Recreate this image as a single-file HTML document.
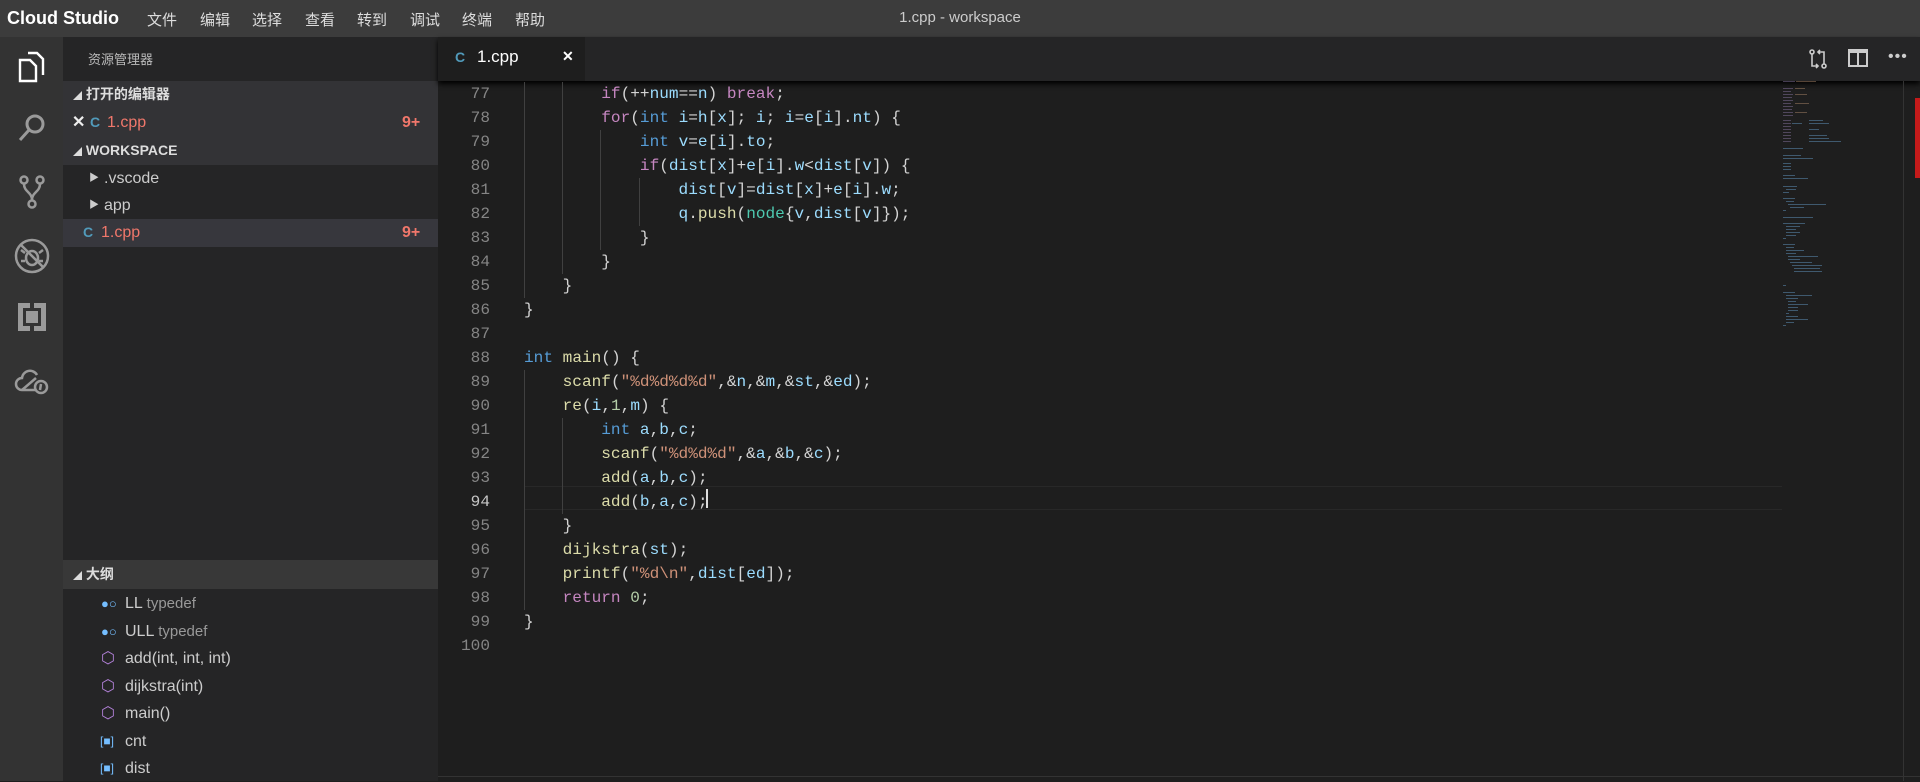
<!DOCTYPE html>
<html><head><meta charset="utf-8">
<style>
*{margin:0;padding:0;box-sizing:border-box}
body{width:1920px;height:781px;background:#1e1e1e;overflow:hidden;position:relative;font-family:"Liberation Sans","Noto Sans CJK SC",sans-serif;color:#ccc}
.abs{position:absolute}
#title{left:0;top:0;width:1920px;height:37px;background:#3c3c3c}
#title .brand{left:7px;top:8px;font-weight:bold;font-size:18px;color:#fff}
#title .m{top:9px;font-size:15px;color:#ddd}
#act{left:0;top:37px;width:63px;height:744px;background:#333}
#side{left:63px;top:37px;width:375px;height:744px;background:#252526}
.row{position:absolute;left:0;width:375px;height:27px;font-size:16px;line-height:27px;white-space:nowrap}
.hdr{font-weight:bold;font-size:14px;color:#ddd}
.red{color:#f0776b}
.code{font-family:"Liberation Mono",monospace;font-size:16.1px;white-space:pre}
.ln{position:absolute;left:440px;width:50px;text-align:right;color:#858585;height:24px;line-height:24px}
.cl{position:absolute;left:524px;height:24px;line-height:24px;color:#d4d4d4}
.k{color:#c586c0}.t{color:#569cd6}.v{color:#9cdcfe}.f{color:#dcdcaa}.s{color:#ce9178}.n{color:#b5cea8}.c{color:#4ec9b0}
.g{position:absolute;width:1px;background:#404040}
</style></head><body>
<div id="title" class="abs">
<div class="abs brand">Cloud Studio</div>
<div class="abs m" style="left:147px">文件</div>
<div class="abs m" style="left:200px">编辑</div>
<div class="abs m" style="left:252px">选择</div>
<div class="abs m" style="left:305px">查看</div>
<div class="abs m" style="left:357px">转到</div>
<div class="abs m" style="left:410px">调试</div>
<div class="abs m" style="left:462px">终端</div>
<div class="abs m" style="left:515px">帮助</div>
<div class="abs" style="left:0;width:1920px;text-align:center;top:9px;font-size:15px;color:#ccc">1.cpp - workspace</div>
</div>
<div id="act" class="abs">
<svg class="abs" style="left:14px;top:12px" width="36" height="36" viewBox="0 0 36 36" fill="none" stroke="#fff" stroke-width="2.4"><path d="M14 4h9l6 6v16"/><path d="M6 11h10l6 6v15H6z"/></svg>
<svg class="abs" style="left:14px;top:73px" width="36" height="36" viewBox="0 0 36 36" fill="none" stroke="#9a9a9a" stroke-width="3"><circle cx="21" cy="14" r="8"/><path d="M15 20L6 30"/></svg>
<svg class="abs" style="left:14px;top:135px" width="36" height="38" viewBox="0 0 36 38" fill="none" stroke="#9a9a9a" stroke-width="2.5"><circle cx="10" cy="8" r="3.5"/><circle cx="26" cy="8" r="3.5"/><circle cx="18" cy="32" r="3.5"/><path d="M10 12c0 8 8 8 8 16M26 12c0 8-8 8-8 16"/></svg>
<svg class="abs" style="left:13px;top:200px" width="38" height="38" viewBox="0 0 38 38" fill="none" stroke="#9a9a9a" stroke-width="2.5"><circle cx="19" cy="19" r="16"/><path d="M8 8l22 22"/><ellipse cx="19" cy="21" rx="6" ry="7"/><path d="M12 16l-4-3M26 16l4-3M12 24h-4M26 24h4"/></svg>
<svg class="abs" style="left:16px;top:264px" width="32" height="32" viewBox="0 0 32 32"><path d="M2 2h12v5H7v18h7v5H2zM18 2h12v28H18v-5h7V7h-7z" fill="#9a9a9a"/><rect x="10" y="10" width="12" height="12" fill="#9a9a9a"/></svg>
<svg class="abs" style="left:14px;top:329px" width="36" height="30" viewBox="0 0 36 30" fill="none" stroke="#9a9a9a" stroke-width="2.5"><path d="M22 24H8a6 6 0 0 1 0-12 8 8 0 0 1 15-3"/><path d="M8 24l14-12"/><circle cx="27" cy="21" r="6"/><path d="M27 18l-1 6"/></svg>
</div>
<div id="side" class="abs">
<div class="abs" style="left:25px;top:12px;font-size:13px;color:#bbb">资源管理器</div>
<div class="abs" style="left:0;top:44px;width:375px;height:84px;background:#333336"></div>
<div class="row hdr" style="top:44px"><span style="margin-left:10px;font-size:9px">◢</span> <span>打开的编辑器</span></div>
<div class="row" style="top:72px"><span style="position:absolute;left:9px;color:#eee;font-weight:bold">✕</span><span style="position:absolute;left:27px;color:#519aba;font-weight:bold;font-size:14px">C</span><span class="red" style="position:absolute;left:44px">1.cpp</span><span class="red" style="position:absolute;left:339px;font-weight:bold">9+</span></div>
<div class="row hdr" style="top:100px"><span style="margin-left:10px;font-size:9px">◢</span> <span>WORKSPACE</span></div>
<div class="row" style="top:128px"><span style="position:absolute;left:26px;font-size:10px">▶</span><span style="position:absolute;left:41px">.vscode</span></div>
<div class="row" style="top:155px"><span style="position:absolute;left:26px;font-size:10px">▶</span><span style="position:absolute;left:41px">app</span></div>
<div class="row" style="top:182px;background:#37373d;height:28px"><span style="position:absolute;left:20px;color:#519aba;font-weight:bold;font-size:14px">C</span><span class="red" style="position:absolute;left:38px">1.cpp</span><span class="red" style="position:absolute;left:339px;font-weight:bold">9+</span></div>
<div class="abs" style="left:0;top:523px;width:375px;height:29px;background:#383838"></div>
<div class="row hdr" style="top:524px"><span style="margin-left:10px;font-size:9px">◢</span> <span>大纲</span></div>
<div class="row" style="top:553px"><span style="position:absolute;left:38px;color:#75beff;font-size:13px">●○</span><span style="position:absolute;left:62px">LL <span style="color:#999;font-size:15px">typedef</span></span></div>
<div class="row" style="top:581px"><span style="position:absolute;left:38px;color:#75beff;font-size:13px">●○</span><span style="position:absolute;left:62px">ULL <span style="color:#999;font-size:15px">typedef</span></span></div>
<div class="row" style="top:608px"><span style="position:absolute;left:38px;color:#b180d7">⬡</span><span style="position:absolute;left:62px">add(int, int, int)</span></div>
<div class="row" style="top:636px"><span style="position:absolute;left:38px;color:#b180d7">⬡</span><span style="position:absolute;left:62px">dijkstra(int)</span></div>
<div class="row" style="top:663px"><span style="position:absolute;left:38px;color:#b180d7">⬡</span><span style="position:absolute;left:62px">main()</span></div>
<div class="row" style="top:691px"><span style="position:absolute;left:37px;color:#75beff;font-size:12px">[■]</span><span style="position:absolute;left:62px">cnt</span></div>
<div class="row" style="top:718px"><span style="position:absolute;left:37px;color:#75beff;font-size:12px">[■]</span><span style="position:absolute;left:62px">dist</span></div>
</div>
<!-- tab bar -->
<div class="abs" style="left:438px;top:37px;width:1482px;height:44px;background:#252526;box-shadow:0 3px 5px #000"></div>
<div class="abs" style="left:438px;top:37px;width:147px;height:44px;background:#1e1e1e"></div>
<div class="abs" style="left:455px;top:49px;color:#519aba;font-weight:bold;font-size:14px">C</div>
<div class="abs" style="left:477px;top:47px;color:#fff;font-size:17px">1.cpp</div>
<div class="abs" style="left:562px;top:48px;color:#fff;font-weight:bold;font-size:14px">✕</div>
<svg class="abs" style="left:1807px;top:48px" width="22" height="22" viewBox="0 0 22 22" fill="none" stroke="#ccc" stroke-width="1.6"><circle cx="5" cy="4" r="2"/><circle cx="17" cy="18" r="2"/><path d="M5 6v12h6M17 16V4h-6M9 16l2 2-2 2M13 2l-2 2 2 2"/></svg>
<svg class="abs" style="left:1848px;top:49px" width="20" height="18" viewBox="0 0 20 18" fill="none" stroke="#ccc" stroke-width="2"><rect x="1" y="1" width="18" height="16"/><path d="M10 1v16M1 3h18"/></svg>
<div class="abs" style="left:1888px;top:48px;color:#ccc;font-size:16px;letter-spacing:1px">•••</div>
<!-- current line -->
<div class="abs" style="left:524px;top:486px;width:1258px;height:24px;border-top:1px solid #282828;border-bottom:1px solid #282828"></div>
<div class="abs" style="left:706px;top:489px;width:2px;height:19px;background:#ddd"></div>
<!-- indent guides -->
<div class="g" style="left:524px;top:82px;height:216px"></div>
<div class="g" style="left:562px;top:82px;height:192px"></div>
<div class="g" style="left:600px;top:130px;height:120px"></div>
<div class="g" style="left:639px;top:178px;height:48px"></div>
<div class="g" style="left:524px;top:370px;height:240px"></div>
<div class="g" style="left:562px;top:418px;height:96px"></div>
<div class="code">
<div class="ln" style="top:82px">77</div><div class="cl" style="top:82px">        <span class="k">if</span>(++<span class="v">num</span>==<span class="v">n</span>) <span class="k">break</span>;</div>
<div class="ln" style="top:106px">78</div><div class="cl" style="top:106px">        <span class="k">for</span>(<span class="t">int</span> <span class="v">i</span>=<span class="v">h</span>[<span class="v">x</span>]; <span class="v">i</span>; <span class="v">i</span>=<span class="v">e</span>[<span class="v">i</span>].<span class="v">nt</span>) {</div>
<div class="ln" style="top:130px">79</div><div class="cl" style="top:130px">            <span class="t">int</span> <span class="v">v</span>=<span class="v">e</span>[<span class="v">i</span>].<span class="v">to</span>;</div>
<div class="ln" style="top:154px">80</div><div class="cl" style="top:154px">            <span class="k">if</span>(<span class="v">dist</span>[<span class="v">x</span>]+<span class="v">e</span>[<span class="v">i</span>].<span class="v">w</span>&lt;<span class="v">dist</span>[<span class="v">v</span>]) {</div>
<div class="ln" style="top:178px">81</div><div class="cl" style="top:178px">                <span class="v">dist</span>[<span class="v">v</span>]=<span class="v">dist</span>[<span class="v">x</span>]+<span class="v">e</span>[<span class="v">i</span>].<span class="v">w</span>;</div>
<div class="ln" style="top:202px">82</div><div class="cl" style="top:202px">                <span class="v">q</span>.<span class="f">push</span>(<span class="c">node</span>{<span class="v">v</span>,<span class="v">dist</span>[<span class="v">v</span>]});</div>
<div class="ln" style="top:226px">83</div><div class="cl" style="top:226px">            }</div>
<div class="ln" style="top:250px">84</div><div class="cl" style="top:250px">        }</div>
<div class="ln" style="top:274px">85</div><div class="cl" style="top:274px">    }</div>
<div class="ln" style="top:298px">86</div><div class="cl" style="top:298px">}</div>
<div class="ln" style="top:322px">87</div>
<div class="ln" style="top:346px">88</div><div class="cl" style="top:346px"><span class="t">int</span> <span class="f">main</span>() {</div>
<div class="ln" style="top:370px">89</div><div class="cl" style="top:370px">    <span class="f">scanf</span>(<span class="s">"%d%d%d%d"</span>,&amp;<span class="v">n</span>,&amp;<span class="v">m</span>,&amp;<span class="v">st</span>,&amp;<span class="v">ed</span>);</div>
<div class="ln" style="top:394px">90</div><div class="cl" style="top:394px">    <span class="f">re</span>(<span class="v">i</span>,<span class="n">1</span>,<span class="v">m</span>) {</div>
<div class="ln" style="top:418px">91</div><div class="cl" style="top:418px">        <span class="t">int</span> <span class="v">a</span>,<span class="v">b</span>,<span class="v">c</span>;</div>
<div class="ln" style="top:442px">92</div><div class="cl" style="top:442px">        <span class="f">scanf</span>(<span class="s">"%d%d%d"</span>,&amp;<span class="v">a</span>,&amp;<span class="v">b</span>,&amp;<span class="v">c</span>);</div>
<div class="ln" style="top:466px">93</div><div class="cl" style="top:466px">        <span class="f">add</span>(<span class="v">a</span>,<span class="v">b</span>,<span class="v">c</span>);</div>
<div class="ln" style="top:490px;color:#c6c6c6">94</div><div class="cl" style="top:490px">        <span class="f">add</span>(<span class="v">b</span>,<span class="v">a</span>,<span class="v">c</span>);</div>
<div class="ln" style="top:514px">95</div><div class="cl" style="top:514px">    }</div>
<div class="ln" style="top:538px">96</div><div class="cl" style="top:538px">    <span class="f">dijkstra</span>(<span class="v">st</span>);</div>
<div class="ln" style="top:562px">97</div><div class="cl" style="top:562px">    <span class="f">printf</span>(<span class="s">"%d\n"</span>,<span class="v">dist</span>[<span class="v">ed</span>]);</div>
<div class="ln" style="top:586px">98</div><div class="cl" style="top:586px">    <span class="k">return</span> <span class="n">0</span>;</div>
<div class="ln" style="top:610px">99</div><div class="cl" style="top:610px">}</div>
<div class="ln" style="top:634px">100</div>
</div>
<!-- minimap -->
<svg class="abs" style="left:1782px;top:81px" width="120" height="200" opacity=".55">
<g fill="#7a6a90"><rect x="1" y="0" width="12" height="1"/><rect x="1" y="7" width="10" height="1"/><rect x="1" y="10" width="8" height="1"/><rect x="1" y="13" width="10" height="1"/><rect x="1" y="16" width="9" height="1"/><rect x="1" y="19" width="10" height="1"/><rect x="1" y="22" width="8" height="1"/><rect x="1" y="25" width="10" height="1"/><rect x="1" y="28" width="9" height="1"/><rect x="1" y="31" width="10" height="1"/><rect x="1" y="34" width="10" height="1"/>
<rect x="1" y="39" width="8" height="1"/><rect x="1" y="42" width="8" height="1"/><rect x="1" y="45" width="8" height="1"/><rect x="1" y="48" width="8" height="1"/><rect x="1" y="51" width="8" height="1"/><rect x="1" y="54" width="8" height="1"/><rect x="1" y="57" width="8" height="1"/><rect x="1" y="60" width="8" height="1"/></g>
<g fill="#9a7a60"><rect x="14" y="0" width="20" height="1"/><rect x="13" y="7" width="10" height="1"/><rect x="13" y="13" width="12" height="1"/><rect x="13" y="22" width="14" height="1"/><rect x="13" y="31" width="12" height="1"/></g>
<g fill="#5a8ab0"><rect x="10" y="42" width="10" height="1"/><rect x="27" y="39" width="14" height="1"/><rect x="27" y="42" width="20" height="1"/><rect x="27" y="48" width="10" height="1"/><rect x="27" y="54" width="18" height="1"/><rect x="27" y="57" width="20" height="1"/><rect x="27" y="60" width="32" height="1"/>
<rect x="1" y="67" width="20" height="1"/><rect x="1" y="74" width="18" height="1"/><rect x="1" y="77" width="30" height="1"/><rect x="1" y="82" width="8" height="1"/><rect x="1" y="85" width="8" height="1"/><rect x="1" y="88" width="8" height="1"/><rect x="1" y="94" width="12" height="1"/><rect x="1" y="97" width="25" height="1"/>
<rect x="1" y="105" width="14" height="1"/><rect x="4" y="108" width="10" height="1"/><rect x="1" y="111" width="6" height="1"/><rect x="1" y="117" width="12" height="1"/><rect x="4" y="120" width="8" height="1"/><rect x="6" y="123" width="38" height="1"/><rect x="8" y="126" width="14" height="1"/><rect x="1" y="129" width="3" height="1"/>
<rect x="1" y="136" width="30" height="1"/><rect x="1" y="142" width="22" height="1"/><rect x="4" y="145" width="14" height="1"/><rect x="4" y="148" width="10" height="1"/><rect x="4" y="151" width="14" height="1"/><rect x="4" y="154" width="10" height="1"/><rect x="1" y="157" width="3" height="1"/>
<rect x="1" y="163" width="12" height="1"/><rect x="4" y="166" width="8" height="1"/><rect x="4" y="169" width="18" height="1"/><rect x="4" y="172" width="10" height="1"/><rect x="6" y="175" width="30" height="1"/><rect x="6" y="178" width="12" height="1"/><rect x="8" y="181" width="22" height="1"/><rect x="10" y="184" width="30" height="1"/><rect x="12" y="187" width="26" height="1"/><rect x="12" y="190" width="28" height="1"/></g>
</svg>
<svg class="abs" style="left:1782px;top:285px" width="120" height="80" opacity=".55"><g fill="#5a8ab0"><rect x="1" y="0" width="3" height="1"/><rect x="1" y="7" width="12" height="1"/><rect x="4" y="10" width="26" height="1"/><rect x="4" y="13" width="12" height="1"/><rect x="6" y="16" width="8" height="1"/><rect x="6" y="19" width="20" height="1"/><rect x="6" y="22" width="10" height="1"/><rect x="6" y="25" width="10" height="1"/><rect x="4" y="28" width="3" height="1"/><rect x="4" y="31" width="12" height="1"/><rect x="4" y="34" width="22" height="1"/><rect x="4" y="37" width="8" height="1"/><rect x="1" y="40" width="3" height="1"/></g></svg>
<div class="abs" style="left:1903px;top:81px;width:1px;height:700px;background:#333"></div>
<div class="abs" style="left:1915px;top:98px;width:5px;height:80px;background:#c41a1a"></div>
<div class="abs" style="left:438px;top:776px;width:1482px;height:1px;background:#333"></div>
</body></html>
